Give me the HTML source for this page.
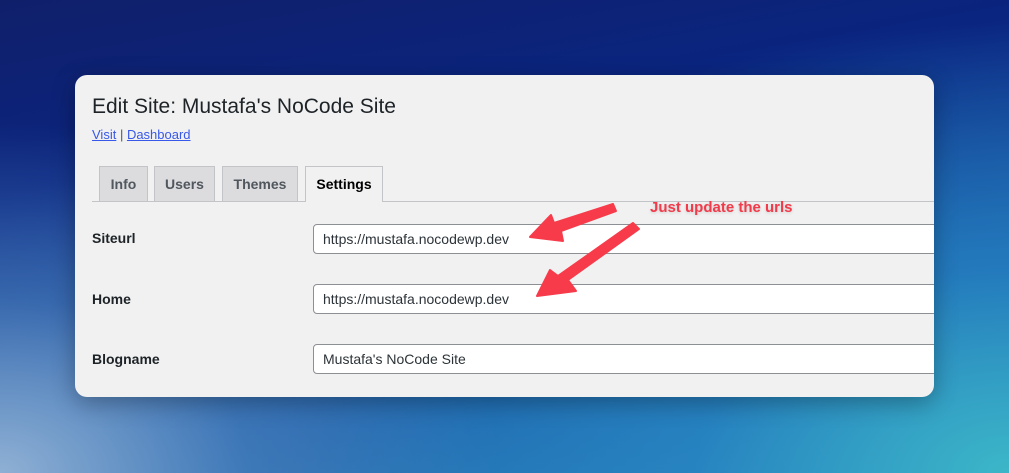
<!DOCTYPE html>
<html><head><style>
*{margin:0;padding:0;box-sizing:border-box}
body{width:1009px;height:473px;overflow:hidden;position:relative;font-family:"Liberation Sans",sans-serif;
background:radial-gradient(ellipse 700px 450px at 1009px 473px,#3cb6c8 0%,rgba(40,140,200,0.6) 45%,rgba(20,80,170,0) 100%),
radial-gradient(ellipse 500px 350px at 0px 473px,#8fb0d4 0%,rgba(80,130,190,0.6) 50%,rgba(30,60,150,0) 100%),
linear-gradient(170deg,#101f6a 0%,#0a2580 30%,#1a5aa8 65%,#2a80b8 100%);}
.card{position:absolute;left:75px;top:75px;width:859px;height:322px;background:#f1f1f1;border-radius:12px;overflow:hidden;box-shadow:0 6px 24px rgba(0,0,0,.3)}
h1{position:absolute;left:17px;top:20px;font-size:21px;font-weight:400;color:#1d2327}
.links{position:absolute;left:17px;top:52px;font-size:13px;color:#50575e}
.links a{color:#3858e9;text-decoration:underline}
.tab{position:absolute;top:91px;height:35px;border:1px solid #c3c4c7;border-bottom:none;background:#dcdcde;color:#50575e;font-weight:bold;font-size:14px;text-align:center;line-height:34px}
.tab.on{background:#f1f1f1;color:#000;height:36px}
.line{position:absolute;left:17px;top:126px;right:0;height:1px;background:#c3c4c7}
.lab{position:absolute;left:17px;font-size:14px;font-weight:bold;color:#1d2327}
.inp{position:absolute;left:238px;width:640px;height:30px;background:#fff;border:1px solid #8c8f94;border-radius:4px;font-size:14px;color:#2c3338;padding-left:9px;line-height:28px}
</style></head><body>
<div class="card">
<h1>Edit Site: Mustafa's NoCode Site</h1>
<div class="links"><a>Visit</a> | <a>Dashboard</a></div>
<div class="tab" style="left:24px;width:49px">Info</div>
<div class="tab" style="left:79px;width:61px">Users</div>
<div class="tab" style="left:147px;width:76px">Themes</div>
<div class="line"></div>
<div class="tab on" style="left:230px;width:78px">Settings</div>
<div class="lab" style="top:155px">Siteurl</div>
<div class="inp" style="top:149px">https://mustafa.nocodewp.dev</div>
<div class="lab" style="top:216px">Home</div>
<div class="inp" style="top:209px">https://mustafa.nocodewp.dev</div>
<div class="lab" style="top:276px">Blogname</div>
<div class="inp" style="top:269px">Mustafa's NoCode Site</div>
</div>
<div style="position:absolute;left:650px;top:199px;font-size:15px;font-weight:bold;color:#f23a4a;text-shadow:0 1px 3px rgba(0,0,0,.15)">Just update the urls</div>
<svg width="1009" height="473" style="position:absolute;left:0;top:0">
<g fill="#f73b4a" stroke="#f73b4a" stroke-linejoin="round" stroke-width="2">
<polygon points="613,204 616,211 561,231 563,241 530,237 551,215 554,223"/>
<polygon points="633,223 639,229 568,280 576,291 537,296 550,270 558,276"/>
</g></svg>
</body></html>
